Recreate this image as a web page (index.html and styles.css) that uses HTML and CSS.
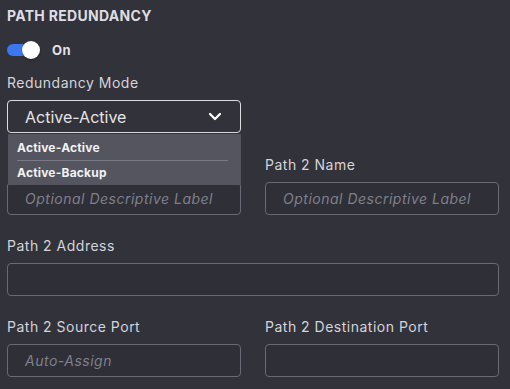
FILE: index.html
```html
<!DOCTYPE html>
<html>
	<head>
		<meta charset="UTF-8">
		<title>Path Redundancy</title>
		<link rel="stylesheet" href="styles.css">
	</head>
	<body>
		<div class="panel">
			<div class="title">PATH REDUNDANCY</div>
			<div class="toggle-row">
				<span class="switch"><span class="knob"></span></span>
				<span class="toggle-text">On</span>
			</div>
			<div class="field">
				<label class="label">Redundancy Mode</label>
				<div class="select-wrap">
					<div class="select">
						<span>Active-Active</span>
						<svg class="chevron" width="14" height="9" viewBox="0 0 14 9">
							<path d="M2 2 L7 7 L12 2" fill="none" stroke="#fff" stroke-width="2.2" stroke-linecap="round" stroke-linejoin="round"/>
						</svg>
					</div>
					<ul class="menu">
						<li>Active-Active</li>
						<li>Active-Backup</li>
					</ul>
				</div>
			</div>
			<div class="grid">
				<div class="field">
					<label class="label hidden">Path 1 Name</label>
					<div class="input placeholder">Optional Descriptive Label</div>
				</div>
				<div class="field">
					<label class="label">Path 2 Name</label>
					<div class="input placeholder">Optional Descriptive Label</div>
				</div>
				<div class="field wide">
					<label class="label">Path 2 Address</label>
					<div class="input"></div>
				</div>
				<div class="field">
					<label class="label">Path 2 Source Port</label>
					<div class="input placeholder">Auto-Assign</div>
				</div>
				<div class="field">
					<label class="label">Path 2 Destination Port</label>
					<div class="input"></div>
				</div>
			</div>
		</div>
	</body>
</html>
```

FILE: styles.css
```css
html,body {
	margin: 0;
	background-color: #32323a;
}
body {
	font-family: Inter, "Open Sans", sans-serif;
	color: #d4d4d9;
}
.panel {
	width: 492px;
	padding: 6px 11px 0 7px;
}
.title {
	font-size: 14px;
	font-weight: 700;
	line-height: 20px;
	letter-spacing: 0.3px;
	color: #dedee2;
}
.toggle-row {
	display: flex;
	align-items: center;
	height: 20px;
	margin-top: 14px;
}
.switch {
	position: relative;
	width: 26px;
	height: 12px;
	border-radius: 6px;
	background-color: #3b78f0;
}
.knob {
	position: absolute;
	left: 15px;
	top: -3px;
	width: 18px;
	height: 18px;
	border-radius: 50%;
	background-color: #fff;
	box-shadow: 0 1px 2px rgba(0,0,0,.4);
}
.toggle-text {
	margin-left: 19px;
	font-size: 13px;
	font-weight: 700;
	letter-spacing: 0.4px;
	color: #e2e2e6;
}
.field {
	display: flex;
	flex-direction: column;
	margin-top: 13px;
}
.grid {
	display: grid;
	grid-template-columns: 234px 234px;
	column-gap: 24px;
	margin-top: 1px;
}
.grid .field {
	margin-top: 21px;
}
.grid .wide {
	grid-column: 1 / 3;
}
.label {
	font-size: 14px;
	line-height: 20px;
	letter-spacing: 0.5px;
	margin-bottom: 7px;
}
.hidden {
	visibility: hidden;
}
.select-wrap {
	position: relative;
	width: 234px;
}
.select {
	box-sizing: border-box;
	height: 33px;
	display: flex;
	align-items: center;
	justify-content: space-between;
	padding: 0 18px 0 17px;
	border: 1px solid #dcdce0;
	border-radius: 4px;
	font-size: 16px;
	color: #e4e4e8;
}
.menu {
	position: absolute;
	top: 34px;
	left: 1px;
	right: 0;
	margin: 0;
	padding: 0 9px;
	list-style: none;
	background-color: #55555f;
	font-size: 12px;
	font-weight: 700;
	letter-spacing: 0.2px;
	color: #f2f2f4;
	z-index: 2;
}
.menu li {
	height: 26px;
	line-height: 27px;
	margin: 0 4px 0 0;
}
.menu li + li {
	height: 24px;
	line-height: 23px;
	border-top: 1px solid #7a7a84;
}
.input {
	box-sizing: border-box;
	height: 33px;
	display: flex;
	align-items: center;
	padding: 0 17px;
	border: 1px solid #6a6a76;
	border-radius: 4px;
	background-color: #2f2f37;
	font-size: 14px;
}
.placeholder {
	font-style: italic;
	letter-spacing: 0.5px;
	color: #80808b;
}
```
